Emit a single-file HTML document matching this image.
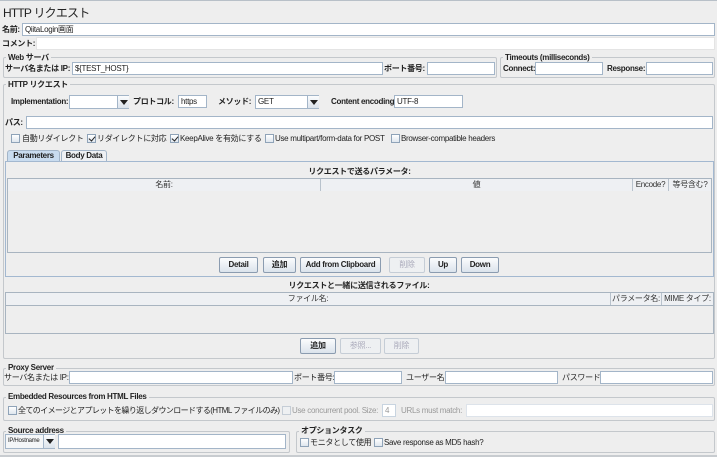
<!DOCTYPE html>
<html><head><meta charset="utf-8"><style>
*{box-sizing:border-box;margin:0;padding:0}
body{width:717px;height:457px;background:#eeeeee;font-family:"Liberation Sans","Noto Sans CJK JP",sans-serif;font-size:8px;letter-spacing:-0.3px;color:#222;position:relative;overflow:hidden}
div,span{position:absolute}
.t{white-space:nowrap;line-height:12px}
.b{font-weight:bold}
.f{background:#fff;border:1px solid #a3b5c8;height:13px;line-height:11px;padding-left:2px;white-space:nowrap}
.box{border:1px solid #c4c8cc;border-radius:2px}
.lg{background:#eeeeee;padding:0 2px;font-weight:bold;white-space:nowrap;line-height:11px}
.cb{width:9px;height:9px;border:1px solid #8fa3b8;background:linear-gradient(#fff,#dfe6ee)}
.cb.c::after{content:"";position:absolute;left:2px;top:0px;width:3px;height:5px;border-right:1.5px solid #222;border-bottom:1.5px solid #222;transform:rotate(40deg)}
.btn{height:16px;border:1px solid #8b9cb0;border-radius:2px;background:linear-gradient(#fbfcfd,#dbe3ec);font-weight:bold;text-align:center;line-height:14px;white-space:nowrap}
.dis{color:#aab;border-color:#c5cdd6;background:#eef0f2;font-weight:normal}
.arr{background:linear-gradient(#fbfcfd,#dbe3ec);border-left:1px solid #a3b5c8}
.arr::after{content:"";position:absolute;left:2px;top:4px;border-left:4px solid transparent;border-right:4px solid transparent;border-top:5px solid #222}
.th{background:#eef0f3;border-right:1px solid #b8c2cc;text-align:center;line-height:11px;height:12px;white-space:nowrap;color:#333;overflow:hidden}
</style></head><body>
<div style="left:0;top:0;width:717px;height:1px;background:#b8c0c8"></div>
<div class="t" style="left:3px;top:6px;font-size:12px;line-height:14px;letter-spacing:-0.8px">HTTP リクエスト</div>

<div class="t b" style="left:2px;top:24px">名前:</div>
<div class="f" style="left:22px;top:23px;width:693px">QiitaLogin画面</div>
<div class="t b" style="left:2px;top:38px">コメント:</div>
<div class="f" style="left:36px;top:37px;width:679px;border-color:#e4e4e4"></div>

<div class="box" style="left:3px;top:57px;width:494px;height:21px"></div>
<div class="lg" style="left:6px;top:52px">Web サーバ</div>
<div class="t b" style="left:5px;top:63px">サーバ名または IP:</div>
<div class="f" style="left:72px;top:62px;width:311px">${TEST_HOST}</div>
<div class="t b" style="left:384px;top:63px">ポート番号:</div>
<div class="f" style="left:427px;top:62px;width:68px"></div>

<div class="box" style="left:500px;top:57px;width:215px;height:21px"></div>
<div class="lg" style="left:503px;top:52px">Timeouts (milliseconds)</div>
<div class="t b" style="left:503px;top:63px">Connect:</div>
<div class="f" style="left:535px;top:62px;width:68px"></div>
<div class="t b" style="left:607px;top:63px">Response:</div>
<div class="f" style="left:646px;top:62px;width:67px"></div>

<div class="box" style="left:3px;top:84px;width:712px;height:275px"></div>
<div class="lg" style="left:6px;top:79px">HTTP リクエスト</div>
<div class="t b" style="left:11px;top:96px">Implementation:</div>
<div class="f" style="left:69px;top:95px;width:60px;height:14px"><div class="arr" style="left:47px;top:0;width:12px;height:12px"></div></div>
<div class="t b" style="left:133px;top:96px">プロトコル:</div>
<div class="f" style="left:178px;top:95px;width:29px">https</div>
<div class="t b" style="left:218px;top:96px">メソッド:</div>
<div class="f" style="left:255px;top:95px;width:64px;height:14px">GET<div class="arr" style="left:51px;top:0;width:12px;height:12px"></div></div>
<div class="t b" style="left:331px;top:96px">Content encoding:</div>
<div class="f" style="left:394px;top:95px;width:69px">UTF-8</div>
<div class="t b" style="left:5px;top:117px">パス:</div>
<div class="f" style="left:26px;top:116px;width:687px"></div>

<div class="cb" style="left:11px;top:134px"></div><div class="t" style="left:22px;top:133px">自動リダイレクト</div>
<div class="cb c" style="left:87px;top:134px"></div><div class="t" style="left:97px;top:133px">リダイレクトに対応</div>
<div class="cb c" style="left:170px;top:134px"></div><div class="t" style="left:180px;top:133px">KeepAlive を有効にする</div>
<div class="cb" style="left:265px;top:134px"></div><div class="t" style="left:275px;top:133px">Use multipart/form-data for POST</div>
<div class="cb" style="left:391px;top:134px"></div><div class="t" style="left:401px;top:133px">Browser-compatible headers</div>

<div class="t b" style="left:7px;top:150px;width:53px;height:12px;background:#c9dcef;border:1px solid #a3b5c8;border-bottom:none;border-radius:3px 3px 0 0;text-align:center;line-height:10px">Parameters</div>
<div class="t b" style="left:61px;top:150px;width:46px;height:12px;background:#eef0f3;border:1px solid #a3b5c8;border-bottom:none;border-radius:3px 3px 0 0;text-align:center;line-height:10px">Body Data</div>
<div style="left:5px;top:161px;width:709px;height:116px;border:1px solid #a3b8d0"></div>
<div class="t b" style="left:5px;top:166px;width:709px;text-align:center">リクエストで送るパラメータ:</div>
<div style="left:7px;top:178px;width:705px;height:75px;border:1px solid #a8b4c0;background:#eeeeee"></div>
<div style="left:8px;top:179px;width:703px;height:12px;border-bottom:1px solid #a8b4c0">
<div class="th" style="left:0;top:0;width:313px">名前:</div>
<div class="th" style="left:313px;top:0;width:312px">値</div>
<div class="th" style="left:625px;top:0;width:36px">Encode?</div>
<div class="th" style="left:661px;top:0;width:42px;border-right:none">等号含む?</div></div>

<div class="btn" style="left:219px;top:257px;width:39px">Detail</div>
<div class="btn" style="left:263px;top:257px;width:33px">追加</div>
<div class="btn" style="left:300px;top:257px;width:81px">Add from Clipboard</div>
<div class="btn dis" style="left:389px;top:257px;width:36px">削除</div>
<div class="btn" style="left:429px;top:257px;width:28px">Up</div>
<div class="btn" style="left:461px;top:257px;width:38px">Down</div>

<div class="t b" style="left:3px;top:280px;width:712px;text-align:center">リクエストと一緒に送信されるファイル:</div>
<div style="left:5px;top:292px;width:709px;height:42px;border:1px solid #a8b4c0"></div>
<div style="left:6px;top:293px;width:707px;height:13px;border-bottom:1px solid #a8b4c0">
<div class="th" style="left:0;top:0;width:605px">ファイル名:</div>
<div class="th" style="left:605px;top:0;width:51px">パラメータ名:</div>
<div class="th" style="left:656px;top:0;width:51px;border-right:none">MIME タイプ:</div></div>
<div class="btn" style="left:300px;top:338px;width:36px">追加</div>
<div class="btn dis" style="left:340px;top:338px;width:41px">参照...</div>
<div class="btn dis" style="left:384px;top:338px;width:35px">削除</div>

<div class="box" style="left:3px;top:368px;width:712px;height:18px"></div>
<div class="lg" style="left:6px;top:362px">Proxy Server</div>
<div class="t" style="left:4px;top:372px">サーバ名または IP:</div>
<div class="f" style="left:69px;top:371px;width:224px"></div>
<div class="t" style="left:294px;top:372px">ポート番号:</div>
<div class="f" style="left:334px;top:371px;width:68px"></div>
<div class="t" style="left:406px;top:372px">ユーザー名</div>
<div class="f" style="left:445px;top:371px;width:113px"></div>
<div class="t" style="left:562px;top:372px">パスワード</div>
<div class="f" style="left:600px;top:371px;width:113px"></div>

<div class="box" style="left:3px;top:397px;width:712px;height:24px"></div>
<div class="lg" style="left:6px;top:391px">Embedded Resources from HTML Files</div>
<div class="cb" style="left:8px;top:406px"></div><div class="t" style="left:18px;top:405px;letter-spacing:-0.6px">全てのイメージとアプレットを繰り返しダウンロードする(HTML ファイルのみ)</div>
<div class="cb" style="left:282px;top:406px;border-color:#c5cdd6;background:#eef0f2"></div><div class="t" style="left:292px;top:405px;color:#999">Use concurrent pool. Size:</div>
<div class="f" style="left:382px;top:404px;width:14px;color:#999;border-color:#c8d4e0">4</div>
<div class="t" style="left:401px;top:405px;color:#999">URLs must match:</div>
<div class="f" style="left:466px;top:404px;width:247px;border-color:#dde3ea"></div>

<div class="box" style="left:3px;top:431px;width:287px;height:22px"></div>
<div class="lg" style="left:6px;top:425px">Source address</div>
<div class="f" style="left:5px;top:434px;width:50px;height:15px;font-size:6px;line-height:12px;background:#f4f6f8">IP/Hostname<div class="arr" style="left:37px;top:0;width:12px;height:13px"></div></div>
<div class="f" style="left:58px;top:434px;width:228px;height:15px"></div>

<div class="box" style="left:296px;top:431px;width:419px;height:22px"></div>
<div class="lg" style="left:299px;top:425px">オプションタスク</div>
<div class="cb" style="left:300px;top:438px"></div><div class="t" style="left:310px;top:437px">モニタとして使用</div>
<div class="cb" style="left:374px;top:438px"></div><div class="t" style="left:384px;top:437px">Save response as MD5 hash?</div>
<div style="left:0;top:455px;width:717px;height:2px;background:#c8ccd0"></div>
</body></html>
